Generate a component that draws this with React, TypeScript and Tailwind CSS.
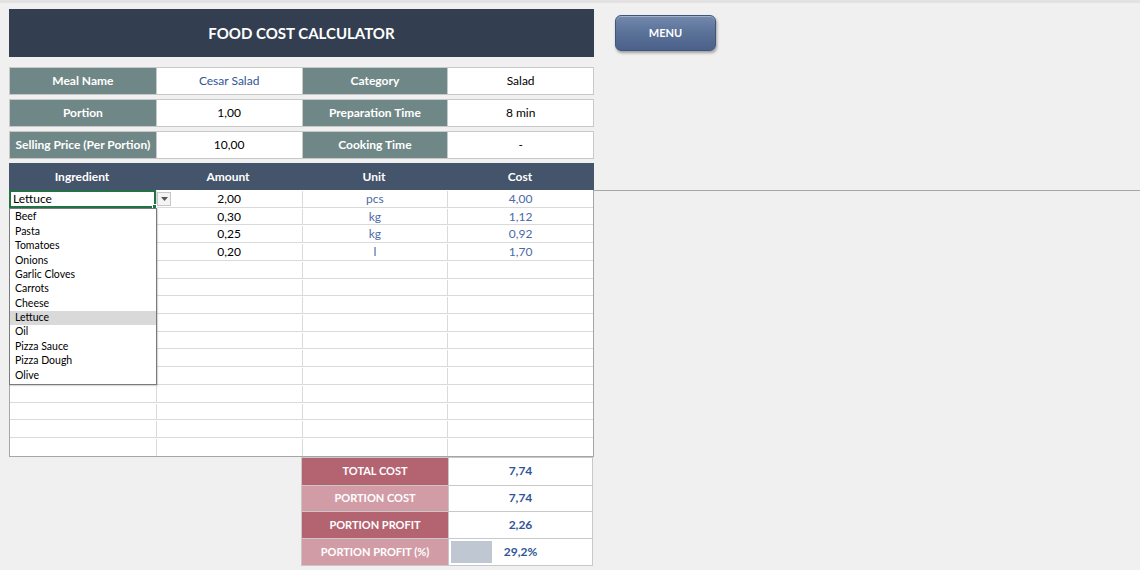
import React from "react";

const info = [
  ["Meal Name", "Cesar Salad", "Category", "Salad"],
  ["Portion", "1,00", "Preparation Time", "8 min"],
  ["Selling Price (Per Portion)", "10,00", "Cooking Time", "-"],
];

const rows: [string, string, string, string][] = [
  ["", "2,00", "pcs", "4,00"],
  ["", "0,30", "kg", "1,12"],
  ["", "0,25", "kg", "0,92"],
  ["", "0,20", "l", "1,70"],
];

const options = [
  "Beef",
  "Pasta",
  "Tomatoes",
  "Onions",
  "Garlic Cloves",
  "Carrots",
  "Cheese",
  "Lettuce",
  "Oil",
  "Pizza Sauce",
  "Pizza Dough",
  "Olive",
];

const summary = [
  { label: "TOTAL COST", value: "7,74", dark: true },
  { label: "PORTION COST", value: "7,74", dark: false },
  { label: "PORTION PROFIT", value: "2,26", dark: true },
  { label: "PORTION PROFIT (%)", value: "29,2%", dark: false, bar: true },
];

export default function App() {
  const body = Array.from({ length: 15 }, (_, i) => rows[i] ?? ["", "", "", ""]);

  return (
    <div
      className="relative h-[570px] w-[1140px] overflow-hidden border-t-[3px] border-[#e2e2e2] bg-[#f0f0f0] text-[12px] text-black"
      style={{ fontFamily: "Lato, 'Open Sans', sans-serif" }}
    >
      {/* gridline running off to the right of the table header */}
      <div className="absolute left-[593px] right-0 top-[187px] h-px bg-[#a6a6a6]" />

      <div className="flex pl-[9px] pt-[6px]">
        <div className="w-[585px]">
          <div className="flex h-[48px] items-center justify-center bg-[#333f50] pt-px text-[15px] font-bold text-white">
            FOOD COST CALCULATOR
          </div>

          <div className="mt-[10px] flex flex-col gap-[4px]">
            {info.map((r) => (
              <div key={r[0]} className="flex h-[28px] border border-[#c8c8c8] bg-white">
                {r.map((c, j) => {
                  const isLabel = j % 2 === 0;
                  return (
                    <div
                      key={j}
                      className={`flex w-[146px] items-center justify-center ${
                        isLabel
                          ? "bg-[#6f8887] font-bold text-white"
                          : c === "Cesar Salad"
                            ? "text-[#2f5597]"
                            : "text-black"
                      } ${j > 0 ? "border-l border-[#c8c8c8]" : ""}`}
                    >
                      {c}
                    </div>
                  );
                })}
              </div>
            ))}
          </div>

          <div className="relative mt-[4px]">
            <div className="flex h-[27px] bg-[#44546a] font-bold text-white">
              {["Ingredient", "Amount", "Unit", "Cost"].map((h) => (
                <div key={h} className="flex w-[146px] items-center justify-center">
                  {h}
                </div>
              ))}
            </div>
            <div className="border-x border-b border-[#a6a6a6] bg-white">
              {body.map((r, i) => (
                <div key={i} className="flex h-[17.73px] border-b border-[#dadada] pt-px last:border-b-0">
                  {r.map((c, j) => (
                    <div
                      key={j}
                      className={`flex w-[146px] items-center justify-center leading-none ${
                        j >= 2 ? "text-[#4a6aa8]" : "text-black"
                      } ${j > 0 ? "border-l border-[#dadada]" : ""}`}
                    >
                      {c}
                    </div>
                  ))}
                </div>
              ))}
            </div>

            {/* active cell with validation dropdown */}
            <div className="absolute left-0 top-[27px] flex h-[18px] w-[147px] items-center border-2 border-[#217346] bg-white pl-[2px] text-[12px]">
              Lettuce
              <div className="absolute -bottom-[3px] -right-[3px] h-[5px] w-[5px] border border-white bg-[#217346]" />
            </div>
            <div className="absolute left-[148px] top-[29px] flex h-[14px] w-[14px] items-center justify-center border border-[#c6c6c6] bg-[#f4f4f4]">
              <svg width="7" height="4" viewBox="0 0 7 4">
                <path d="M0 0h7L3.5 4z" fill="#555" />
              </svg>
            </div>
            <div className="absolute left-0 top-[45px] w-[148px] border border-[#7a7a7a] bg-white py-[1px] shadow-[1px_1px_1px_rgba(0,0,0,0.15)]">
              {options.map((o) => (
                <div
                  key={o}
                  className={`flex h-[14.4px] items-center pl-[5px] text-[10.5px] ${
                    o === "Lettuce" ? "bg-[#d9d9d9]" : ""
                  }`}
                >
                  {o}
                </div>
              ))}
            </div>
          </div>

          <div className="ml-[292px] w-[292px] border border-[#c8c8c8] bg-white">
            {summary.map((s, i) => (
              <div key={s.label} className={`flex h-[26.75px] ${i > 0 ? "border-t border-[#c8c8c8]" : ""}`}>
                <div
                  className={`flex w-[146px] items-center justify-center text-[11px] font-bold text-white ${
                    s.dark ? "bg-[#b46371]" : "bg-[#d29ca7]"
                  }`}
                >
                  {s.label}
                </div>
                <div className="relative flex flex-1 items-center justify-center border-l border-[#c8c8c8] font-bold text-[#2f5597]">
                  {s.bar && (
                    <div className="absolute left-[2px] top-[2px] h-[22px] w-[41px] bg-[#bec7d2]" />
                  )}
                  <span className="relative">{s.value}</span>
                </div>
              </div>
            ))}
          </div>
        </div>

        <button className="ml-[21px] mt-[6px] flex h-[36px] w-[101px] items-center justify-center rounded-[6px] border border-[#3f557a] bg-gradient-to-b from-[#7389ad] via-[#5a7198] to-[#4b6189] text-[11px] font-bold text-white shadow-[1px_2px_3px_rgba(0,0,0,0.35),inset_0_1px_0_rgba(255,255,255,0.35)]">
          MENU
        </button>
      </div>
    </div>
  );
}
